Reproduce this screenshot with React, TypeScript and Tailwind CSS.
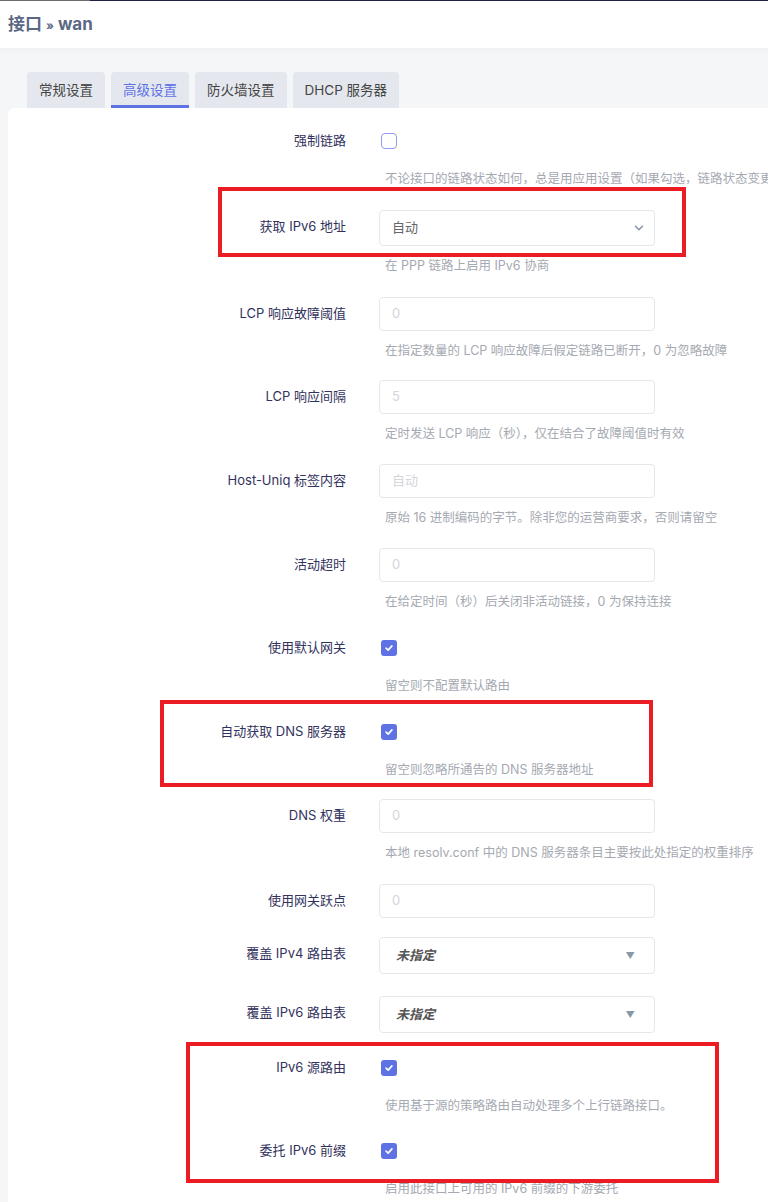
import { ChevronDown } from "lucide-react";

type Field =
  | { kind: "checkbox"; checked: boolean }
  | { kind: "input"; placeholder: string }
  | { kind: "select"; value: string }
  | { kind: "list"; value: string };

type Row = {
  label: string;
  field: Field;
  help?: string;
  gap: string;
};

const rows: Row[] = [
  {
    label: "强制链路",
    field: { kind: "checkbox", checked: false },
    help: "不论接口的链路状态如何，总是用应用设置（如果勾选，链路状态变更时将不再调用热插拔脚本）",
    gap: "mt-0",
  },
  {
    label: "获取 IPv6 地址",
    field: { kind: "select", value: "自动" },
    help: "在 PPP 链路上启用 IPv6 协商",
    gap: "mt-[23px]",
  },
  {
    label: "LCP 响应故障阈值",
    field: { kind: "input", placeholder: "0" },
    help: "在指定数量的 LCP 响应故障后假定链路已断开，0 为忽略故障",
    gap: "mt-[23px]",
  },
  {
    label: "LCP 响应间隔",
    field: { kind: "input", placeholder: "5" },
    help: "定时发送 LCP 响应（秒），仅在结合了故障阈值时有效",
    gap: "mt-[21px]",
  },
  {
    label: "Host-Uniq 标签内容",
    field: { kind: "input", placeholder: "自动" },
    help: "原始 16 进制编码的字节。除非您的运营商要求，否则请留空",
    gap: "mt-[22px]",
  },
  {
    label: "活动超时",
    field: { kind: "input", placeholder: "0" },
    help: "在给定时间（秒）后关闭非活动链接，0 为保持连接",
    gap: "mt-[22px]",
  },
  {
    label: "使用默认网关",
    field: { kind: "checkbox", checked: true },
    help: "留空则不配置默认路由",
    gap: "mt-[20px]",
  },
  {
    label: "自动获取 DNS 服务器",
    field: { kind: "checkbox", checked: true },
    help: "留空则忽略所通告的 DNS 服务器地址",
    gap: "mt-[20px]",
  },
  {
    label: "DNS 权重",
    field: { kind: "input", placeholder: "0" },
    help: "本地 resolv.conf 中的 DNS 服务器条目主要按此处指定的权重排序",
    gap: "mt-[21px]",
  },
  {
    label: "使用网关跃点",
    field: { kind: "input", placeholder: "0" },
    gap: "mt-[23px]",
  },
  {
    label: "覆盖 IPv4 路由表",
    field: { kind: "list", value: "未指定" },
    gap: "mt-[19px]",
  },
  {
    label: "覆盖 IPv6 路由表",
    field: { kind: "list", value: "未指定" },
    gap: "mt-[22px]",
  },
  {
    label: "IPv6 源路由",
    field: { kind: "checkbox", checked: true },
    help: "使用基于源的策略路由自动处理多个上行链路接口。",
    gap: "mt-[17px]",
  },
  {
    label: "委托 IPv6 前缀",
    field: { kind: "checkbox", checked: true },
    help: "启用此接口上可用的 IPv6 前缀的下游委托",
    gap: "mt-[19px]",
  },
];

const tabs = ["常规设置", "高级设置", "防火墙设置", "DHCP 服务器"];

function Checkbox({ checked }: { checked: boolean }) {
  if (!checked) {
    return <span className="block h-4 w-4 rounded-[4px] border-[1.5px] border-[#8f9cf0] bg-white" />;
  }
  return (
    <span className="flex h-4 w-4 items-center justify-center rounded-[3px] bg-[#5e72e4]">
      <svg viewBox="0 0 12 12" className="h-2.5 w-2.5" fill="none" stroke="white" strokeWidth="2" strokeLinecap="round" strokeLinejoin="round">
        <path d="M2.5 6.2 5 8.5 9.5 3.5" />
      </svg>
    </span>
  );
}

function FieldControl({ field }: { field: Field }) {
  switch (field.kind) {
    case "checkbox":
      return (
        <div className="flex h-9 items-center pl-0.5">
          <Checkbox checked={field.checked} />
        </div>
      );
    case "input":
      return (
        <div className="flex h-[34px] w-[276px] items-center rounded-[4px] border border-[#e4e7eb] bg-white px-3 text-[13px] text-[#d3d6db]">
          {field.placeholder}
        </div>
      );
    case "select":
      return (
        <div className="flex h-9 w-[276px] items-center justify-between rounded-[4px] border border-[#e4e7eb] bg-white pl-3 pr-2 text-[13px] text-[#666]">
          <span>{field.value}</span>
          <ChevronDown className="h-3.5 w-3.5 text-[#8898aa]" strokeWidth={2.75} />
        </div>
      );
    case "list":
      return (
        <div className="flex h-[37px] w-[276px] items-center justify-between rounded-[4px] border border-[#e4e7eb] bg-white pl-4 pr-[19px] text-[13px] font-bold italic text-[#555]">
          <span>{field.value}</span>
          <span className="text-[9px] not-italic text-[#8898aa]">▼</span>
        </div>
      );
  }
}

export default function App() {
  return (
    <div className="relative h-[1202px] w-[768px] overflow-hidden bg-[#f5f6f8] font-['Inter','Noto_Sans_CJK_SC',sans-serif]">
      <div className="flex h-px">
        <div className="w-[90px] bg-[#6b6b6b]" />
        <div className="flex-1 bg-[#1e2142]" />
      </div>
      <header className="flex h-[47px] items-center bg-white px-2 shadow-[0_2px_6px_rgba(0,0,0,0.03)]">
        <h2 className="flex items-baseline gap-1 text-[17px] font-bold text-[#5a6884]">
          <span>接口</span>
          <span className="text-[12px]">»</span>
          <span>wan</span>
        </h2>
      </header>

      <nav className="ml-[27px] mt-6 flex gap-1.5">
        {tabs.map((tab, i) => (
          <div
            key={tab}
            className={
              i === 1
                ? "flex h-9 items-center rounded-t-[4px] border-b-[3px] border-[#5e72e4] bg-[#e4e8ee] px-3 pt-[3px] text-[13.5px] text-[#5e72e4]"
                : "flex h-9 items-center rounded-t-[4px] bg-[#e4e8ee] px-3 text-[13.5px] text-[#444]"
            }
          >
            {tab}
          </div>
        ))}
      </nav>

      <main className="ml-2 w-[900px] rounded-tl-[6px] bg-white pt-[15px] pb-10">
        {rows.map((row) => (
          <div key={row.label} className={`grid grid-cols-[338px_1fr] gap-x-[33px] ${row.gap}`}>
            <div
              className={
                row.field.kind === "checkbox"
                  ? "flex h-9 items-center justify-end text-[13px] text-[#32325d]"
                  : "flex h-[33px] items-center justify-end text-[13px] text-[#32325d]"
              }
            >
              {row.label}
            </div>
            <div>
              <FieldControl field={row.field} />
              {row.help && (
                <p className="mt-3 whitespace-nowrap pl-1.5 text-[12.5px] leading-4 text-[#a5a9b1]">{row.help}</p>
              )}
            </div>
          </div>
        ))}
      </main>

      <div className="pointer-events-none absolute left-[218px] top-[187px] h-[70px] w-[468px] border-4 border-[#ec1c24]" />
      <div className="pointer-events-none absolute left-[160px] top-[700px] h-[87px] w-[493px] border-4 border-[#ec1c24]" />
      <div className="pointer-events-none absolute left-[186px] top-[1042px] h-[141px] w-[533px] border-4 border-[#ec1c24]" />
    </div>
  );
}
